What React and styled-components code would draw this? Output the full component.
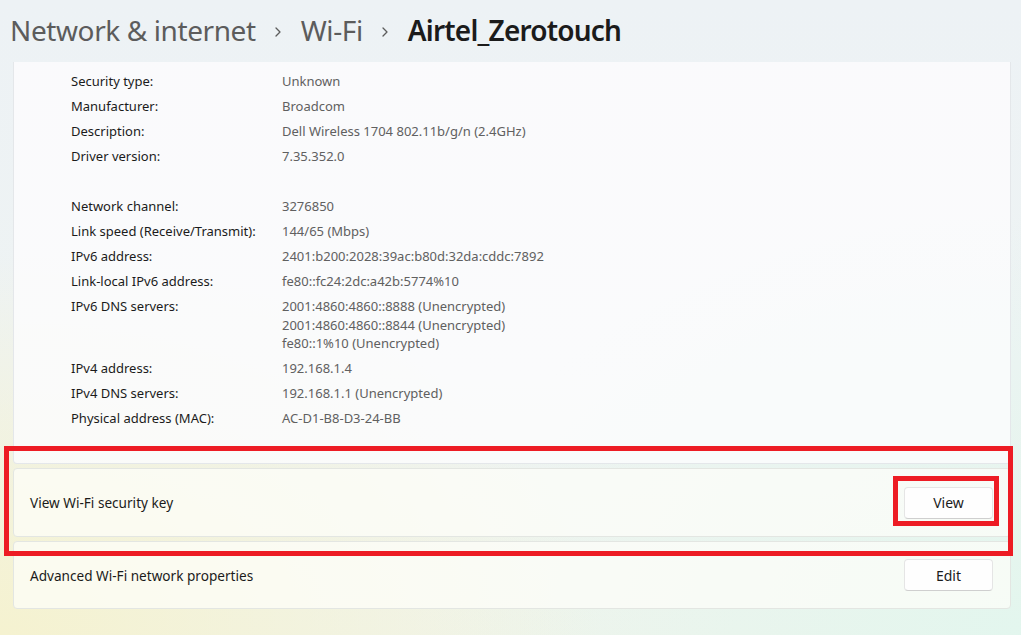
import React from 'react'
import styled, { createGlobalStyle } from 'styled-components'

const GlobalStyle = createGlobalStyle`
  html, body {
    margin: 0;
    padding: 0;
    height: 100%;
  }
  body {
    font-family: "Segoe UI", "Noto Sans", "Open Sans", sans-serif;
    color: #1b1b1b;
    overflow: hidden;
  }
`

const details = [
  { label: 'Security type:', values: ['Unknown'] },
  { label: 'Manufacturer:', values: ['Broadcom'] },
  { label: 'Description:', values: ['Dell Wireless 1704 802.11b/g/n (2.4GHz)'] },
  { label: 'Driver version:', values: ['7.35.352.0'] },
]

const netDetails = [
  { label: 'Network channel:', values: ['3276850'] },
  { label: 'Link speed (Receive/Transmit):', values: ['144/65 (Mbps)'] },
  { label: 'IPv6 address:', values: ['2401:b200:2028:39ac:b80d:32da:cddc:7892'] },
  { label: 'Link-local IPv6 address:', values: ['fe80::fc24:2dc:a42b:5774%10'] },
  {
    label: 'IPv6 DNS servers:',
    values: [
      '2001:4860:4860::8888 (Unencrypted)',
      '2001:4860:4860::8844 (Unencrypted)',
      'fe80::1%10 (Unencrypted)',
    ],
  },
  { label: 'IPv4 address:', values: ['192.168.1.4'] },
  { label: 'IPv4 DNS servers:', values: ['192.168.1.1 (Unencrypted)'] },
  { label: 'Physical address (MAC):', values: ['AC-D1-B8-D3-24-BB'] },
]

const Chevron = () => (
  <svg width="8" height="12" viewBox="0 0 8 12">
    <path d="M2 2 L6 6 L2 10" fill="none" stroke="#5c5c5c" strokeWidth="1.3" strokeLinecap="round" strokeLinejoin="round" />
  </svg>
)

const DetailGroup = ({ items }) => (
  <Group>
    {items.map((d) => (
      <Row key={d.label}>
        <Label>{d.label}</Label>
        <Values>
          {d.values.map((v) => <div key={v}>{v}</div>)}
        </Values>
      </Row>
    ))}
  </Group>
)

const App = () => {
  return (
    <Page>
      <GlobalStyle />
      <Breadcrumb>
        <Crumb>Network &amp; internet</Crumb>
        <Sep><Chevron /></Sep>
        <Crumb>Wi-Fi</Crumb>
        <Sep><Chevron /></Sep>
        <Crumb current>Airtel_Zerotouch</Crumb>
      </Breadcrumb>

      <Stack>
        <InfoCard>
          <DetailGroup items={details} />
          <DetailGroup items={netDetails} />
        </InfoCard>

        <SettingCard>
          <Highlight $top={-23} $right={-3} $bottom={-20} $left={-10} />
          <SettingText>View Wi-Fi security key</SettingText>
          <ButtonWrap>
            <Highlight $top={-11} $right={-6} $bottom={-7} $left={-11} />
            <Button>View</Button>
          </ButtonWrap>
        </SettingCard>

        <SettingCard>
          <SettingText>Advanced Wi-Fi network properties</SettingText>
          <ButtonWrap>
            <Button>Edit</Button>
          </ButtonWrap>
        </SettingCard>
      </Stack>
    </Page>
  )
}

export default App

const Page = styled.div`
  width: 1021px;
  height: 635px;
  box-sizing: border-box;
  background:
    radial-gradient(ellipse 600px 380px at 0% 100%, rgba(245, 242, 208, 1), rgba(245, 242, 208, 0) 100%),
    radial-gradient(ellipse 600px 420px at 100% 100%, rgba(226, 246, 238, 0.95), rgba(226, 246, 238, 0) 100%),
    linear-gradient(180deg, #edf2f5 0%, #eef3f3 60%, #f0f4ec 100%);
  display: flex;
  flex-direction: column;
  overflow: hidden;
`

const Breadcrumb = styled.div`
  display: flex;
  align-items: center;
  height: 62px;
  padding: 0 0 2px 10px;
  box-sizing: border-box;
`

const Crumb = styled.span`
  font-size: 28px;
  line-height: 36px;
  font-weight: ${(p) => (p.current ? 600 : 400)};
  color: ${(p) => (p.current ? '#1b1b1b' : '#5c5c5c')};
  letter-spacing: ${(p) => (p.current ? '-0.8px' : '-0.4px')};
`

const Sep = styled.span`
  display: flex;
  align-items: center;
  padding: 4px 19px 0 18px;
`

const Stack = styled.div`
  display: flex;
  flex-direction: column;
  gap: 4px;
  padding: 0 10px 0 13px;
`

const InfoCard = styled.div`
  background: rgba(251, 252, 253, 0.85);
  border: 1px solid #e4e7ea;
  border-top: none;
  border-radius: 0 0 4px 4px;
  padding: 10px 0 0 57px;
  height: 402px;
  box-sizing: border-box;
  display: flex;
  flex-direction: column;
  gap: 31.5px;
`

const Group = styled.div`
  display: flex;
  flex-direction: column;
  gap: 6.5px;
`

const Row = styled.div`
  display: grid;
  grid-template-columns: 211px 1fr;
  font-size: 13px;
  line-height: 18.5px;
`

const Label = styled.div`
  color: #1b1b1b;
`

const Values = styled.div`
  color: #606060;
`

const SettingCard = styled.div`
  position: relative;
  display: flex;
  align-items: center;
  justify-content: space-between;
  height: 69px;
  box-sizing: border-box;
  padding: 0 17px 0 16px;
  background: rgba(253, 253, 250, 0.72);
  border: 1px solid #e3e6e2;
  border-radius: 4px;

  & + & {
    height: 68px;
  }
`

const SettingText = styled.span`
  font-size: 13.6px;
  color: #1b1b1b;
`

const ButtonWrap = styled.div`
  position: relative;
  display: flex;
`

const Button = styled.button`
  width: 89px;
  height: 32px;
  font-family: inherit;
  font-size: 14px;
  color: #1b1b1b;
  background: #fefefe;
  border: 1px solid #e5e5e5;
  border-bottom-color: #cfcfcf;
  border-radius: 4px;
  padding: 0;
`

const Highlight = styled.div`
  position: absolute;
  top: ${(p) => p.$top}px;
  right: ${(p) => p.$right}px;
  bottom: ${(p) => p.$bottom}px;
  left: ${(p) => p.$left}px;
  border: 5px solid #ed1c24;
  pointer-events: none;
  z-index: 2;
`
